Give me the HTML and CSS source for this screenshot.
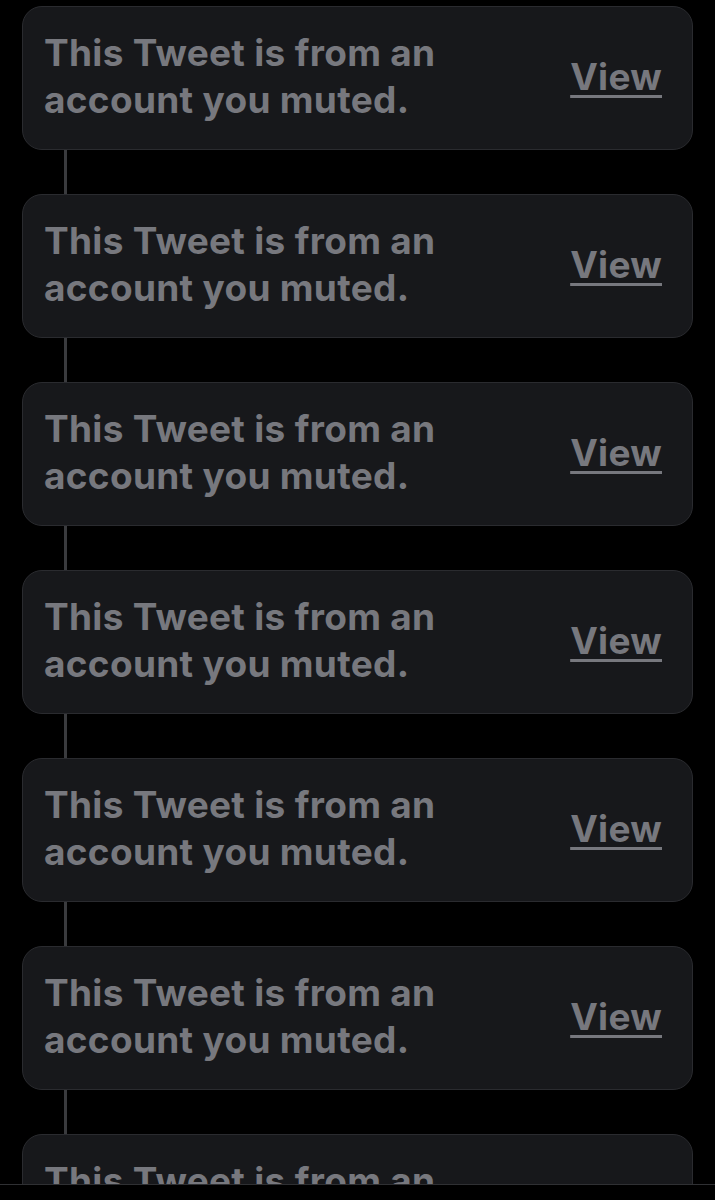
FILE: index.html
```html
<!DOCTYPE html>
<html>
<head>
<meta charset="utf-8">
<link rel="stylesheet" href="styles.css">
</head>
<body>
<div class="feed">
  <div class="card"><p class="msg">This Tweet is from an<br>account you muted.</p><a class="view">View</a></div>
  <div class="line"></div>
  <div class="card"><p class="msg">This Tweet is from an<br>account you muted.</p><a class="view">View</a></div>
  <div class="line"></div>
  <div class="card"><p class="msg">This Tweet is from an<br>account you muted.</p><a class="view">View</a></div>
  <div class="line"></div>
  <div class="card"><p class="msg">This Tweet is from an<br>account you muted.</p><a class="view">View</a></div>
  <div class="line"></div>
  <div class="card"><p class="msg">This Tweet is from an<br>account you muted.</p><a class="view">View</a></div>
  <div class="line"></div>
  <div class="card"><p class="msg">This Tweet is from an<br>account you muted.</p><a class="view">View</a></div>
  <div class="line"></div>
  <div class="card"><p class="msg">This Tweet is from an<br>account you muted.</p><a class="view">View</a></div>
</div>
<div class="tabbar"></div>
</body>
</html>
```
FILE: styles.css
```css
html, body {
  margin: 0;
  padding: 0;
  background: #000;
  height: 1200px;
  overflow: hidden;
}
.feed {
  padding: 6px 22px 0 22px;
  display: flex;
  flex-direction: column;
}
.card {
  box-sizing: border-box;
  height: 144px;
  background: #17181b;
  border: 1px solid #2a2b2f;
  border-radius: 20px;
  display: flex;
  align-items: center;
  justify-content: space-between;
  padding: 0 30px 4px 21px;
  font-family: Inter, "Liberation Sans", sans-serif;
  font-weight: 700;
  color: #77787e;
}
.msg {
  margin: 0;
  font-size: 37px;
  line-height: 47px;
  letter-spacing: 0.3px;
}
.view {
  font-size: 37px;
  text-decoration: underline;
  text-decoration-thickness: 3px;
  text-underline-offset: 5px;
  letter-spacing: 0.3px;
}
.line {
  width: 3px;
  height: 44px;
  margin-left: 42px;
  background: #3a3b3e;
}
.tabbar {
  position: fixed;
  left: 0;
  right: 0;
  top: 1184px;
  height: 16px;
  background: #000;
  border-top: 1px solid #2f3033;
}
```
